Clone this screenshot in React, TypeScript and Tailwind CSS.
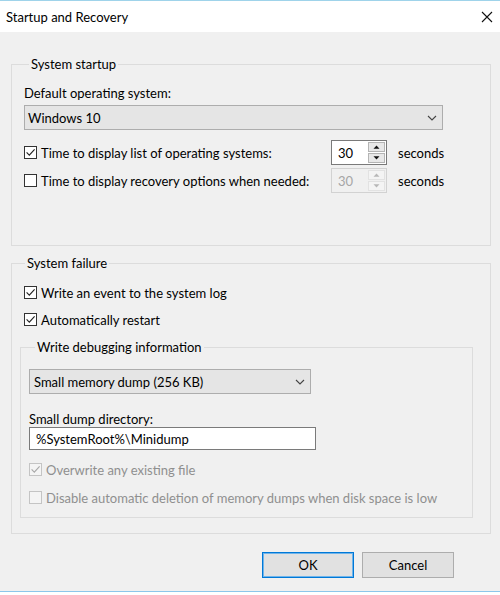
import React from "react";

function Check({ checked, disabled }: { checked?: boolean; disabled?: boolean }) {
  return (
    <span
      className={`w-[13px] h-[13px] border flex items-center justify-center shrink-0 ${
        disabled ? "border-[#c4c4c4] bg-[#f4f4f4]" : "border-[#333333] bg-white"
      }`}
    >
      {checked && (
        <svg width="11" height="11" viewBox="0 0 11 11">
          <path
            d="M1.6 5.4 L4.3 8.1 L9.6 2.4"
            fill="none"
            stroke={disabled ? "#a8a8a8" : "#222222"}
            strokeWidth="1.15"
          />
        </svg>
      )}
    </span>
  );
}

function Chevron() {
  return (
    <svg width="10" height="6" viewBox="0 0 10 6">
      <path d="M1 1 L5 5 L9 1" fill="none" stroke="#444444" strokeWidth="1.1" />
    </svg>
  );
}

function Tri({ up, color }: { up?: boolean; color: string }) {
  return (
    <svg width="7" height="4" viewBox="0 0 7 4">
      <path d={up ? "M0.5 3.8 L3.5 0.5 L6.5 3.8 Z" : "M0.5 0.2 L3.5 3.5 L6.5 0.2 Z"} fill={color} />
    </svg>
  );
}

function Spin({ disabled }: { disabled?: boolean }) {
  return (
    <div
      className={`w-[56px] h-[25px] border flex ${
        disabled ? "border-[#d2d2d2] bg-[#f0f0f0] text-[#a6a6a6]" : "border-[#7a7a7a] bg-white text-black"
      }`}
    >
      <div className="flex-1 pl-[6px] flex items-center">30</div>
      <div className="w-[18px] flex flex-col py-[1px] pr-[1px] gap-[1px]">
        <div
          className={`flex-1 border flex items-center justify-center ${
            disabled ? "border-[#e2e2e2] bg-[#f4f4f4]" : "border-[#b4b4b4] bg-[#e8e8e8]"
          }`}
        >
          <Tri up color={disabled ? "#b8b8b8" : "#111111"} />
        </div>
        <div
          className={`flex-1 border flex items-center justify-center ${
            disabled ? "border-[#e2e2e2] bg-[#f4f4f4]" : "border-[#b4b4b4] bg-[#e8e8e8]"
          }`}
        >
          <Tri color={disabled ? "#b8b8b8" : "#111111"} />
        </div>
      </div>
    </div>
  );
}

export default function App() {
  return (
    <div className="w-[500px] h-[595px] bg-[#f0f0f0] flex flex-col font-[Lato,sans-serif] text-[13px] leading-[16px] text-black overflow-hidden">
      <div className="h-[1px] bg-[#9fd3ea]" />
      <div className="h-[31px] bg-white flex items-center justify-between pl-[6px] pr-[7px]">
        <span>Startup and Recovery</span>
        <svg width="12" height="12" viewBox="0 0 12 12">
          <path d="M1 1 L11 11 M11 1 L1 11" stroke="#111111" strokeWidth="1.1" />
        </svg>
      </div>

      {/* System startup */}
      <fieldset className="mt-[24px] ml-[11px] w-[480px] border border-[#dcdcdc] pl-[12px] pt-[13px] pb-[52px]">
        <legend className="ml-[5px] px-[2px]">System startup</legend>
        <div>Default operating system:</div>
        <div className="mt-[4px] h-[25px] w-[419px] border border-[#adadad] bg-[#e5e5e5] flex items-center justify-between pl-[3px] pr-[5px]">
          <span>Windows 10</span>
          <Chevron />
        </div>
        <div className="mt-[10px] h-[25px] flex items-center">
          <Check checked />
          <span className="ml-[4px] w-[290px]">Time to display list of operating systems:</span>
          <Spin />
          <span className="ml-[11px]">seconds</span>
        </div>
        <div className="mt-[3px] h-[25px] flex items-center">
          <Check />
          <span className="ml-[4px] w-[290px]">Time to display recovery options when needed:</span>
          <Spin disabled />
          <span className="ml-[11px]">seconds</span>
        </div>
      </fieldset>

      {/* System failure */}
      <fieldset className="mt-[9px] ml-[11px] w-[480px] border border-[#dcdcdc] px-[8px] pt-[13px] pb-[15px]">
        <legend className="ml-[5px] px-[2px]">System failure</legend>
        <div className="h-[17px] flex items-center pl-[4px]">
          <Check checked />
          <span className="ml-[4px]">Write an event to the system log</span>
        </div>
        <div className="mt-[10px] h-[17px] flex items-center pl-[4px]">
          <Check checked />
          <span className="ml-[4px]">Automatically restart</span>
        </div>

        <fieldset className="mt-[11px] w-[453px] border border-[#dcdcdc] pl-[8px] pt-[14px] pb-[11px]">
          <legend className="ml-[6px] px-[2px]">Write debugging information</legend>
          <div className="h-[25px] w-[282px] border border-[#adadad] bg-[#e5e5e5] flex items-center justify-between pl-[4px] pr-[5px]">
            <span>Small memory dump (256 KB)</span>
            <Chevron />
          </div>
          <div className="mt-[17px]">Small dump directory:</div>
          <div className="h-[23px] w-[287px] border border-[#7a7a7a] bg-white flex items-center pl-[6px]">
            %SystemRoot%\Minidump
          </div>
          <div className="mt-[11px] h-[17px] flex items-center text-[#8f8f8f]">
            <Check checked disabled />
            <span className="ml-[4px]">Overwrite any existing file</span>
          </div>
          <div className="mt-[11px] h-[17px] flex items-center text-[#8f8f8f]">
            <Check disabled />
            <span className="ml-[4px]">Disable automatic deletion of memory dumps when disk space is low</span>
          </div>
        </fieldset>
      </fieldset>

      {/* Buttons */}
      <div className="mt-[18px] flex justify-end gap-[8px] pr-[46px]">
        <button className="w-[92px] h-[26px] border border-[#0078d7] bg-[#e1e1e1] shadow-[inset_0_0_0_1px_#6fb4ea] flex items-center justify-center">
          OK
        </button>
        <button className="w-[92px] h-[26px] border border-[#adadad] bg-[#e1e1e1] flex items-center justify-center">
          Cancel
        </button>
      </div>

      <div className="mt-auto h-[4px] flex flex-col">
        <div className="h-[1px] bg-[#8cc6ea]" />
        <div className="flex-1 bg-white" />
      </div>
    </div>
  );
}
